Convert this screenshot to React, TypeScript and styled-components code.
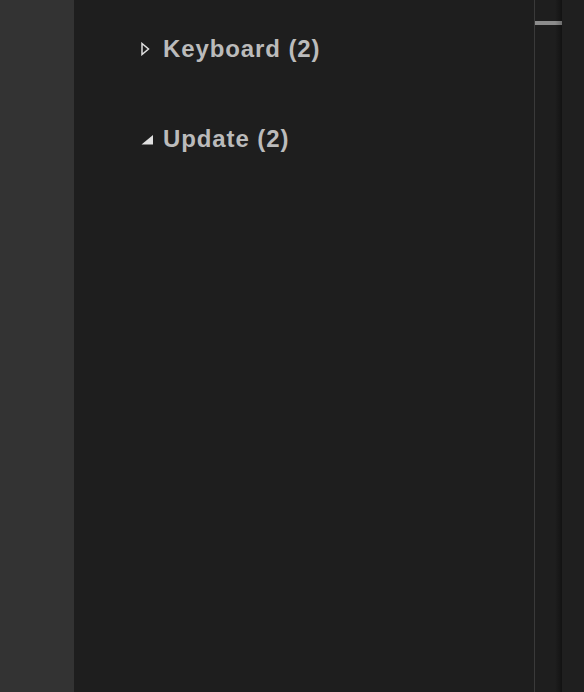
import React from 'react'
import styled, { createGlobalStyle } from 'styled-components'

const GlobalStyle = createGlobalStyle`
  html, body {
    margin: 0;
    padding: 0;
    background: #1e1e1e;
  }
  #root {
    height: 692px;
  }
`

const Layout = styled.div`
  display: flex;
  flex-direction: row;
  height: 692px;
  width: 584px;
  overflow: hidden;
`

const SideBar = styled.div`
  width: 74px;
  flex-shrink: 0;
  background: #333333;
`

const Content = styled.div`
  width: 460px;
  flex-shrink: 0;
  background: #1e1e1e;
  display: flex;
  flex-direction: column;
  padding: 35px 0 0 67px;
  gap: 62px;
  box-sizing: border-box;
`

const Gutter = styled.div`
  width: 27px;
  flex-shrink: 0;
  border-left: 1px solid #3a3a3a;
  background: linear-gradient(
    to right,
    #1e1e1e 0,
    #1e1e1e 20px,
    #161616 25px,
    #121212 27px
  );
  padding-top: 21px;
`

const Thumb = styled.div`
  height: 4px;
  background: linear-gradient(to right, #8c8c8c 0, #8c8c8c 20px, #6e6e6e 27px);
`

const Edge = styled.div`
  flex-grow: 1;
  background: #1f1f1f;
`

const Section = styled.div`
  display: flex;
  flex-direction: row;
  align-items: center;
  height: 28px;
`

const Twistie = styled.span`
  width: 22px;
  height: 28px;
  display: flex;
  align-items: center;
  flex-shrink: 0;
`

const Label = styled.h2`
  margin: 0;
  font-family: 'Liberation Sans', Arial, sans-serif;
  font-weight: bold;
  font-size: 24px;
  letter-spacing: 0.9px;
  color: #bbbbbb;
  line-height: 28px;
`

type SectionProps = {
  title: string
  count: number
  open?: boolean
}

const Collapsed = () => (
  <svg width="10" height="14" viewBox="0 0 10 14">
    <path d="M1 1.5 L7.5 7 L1 12.5 Z" fill="none" stroke="#e0e0e0" strokeWidth="1.5" />
  </svg>
)

const Expanded = () => (
  <svg width="13" height="12" viewBox="0 0 13 12" style={{ marginTop: 2 }}>
    <path d="M12 1 L12 10.5 L0.5 10.5 Z" fill="#e0e0e0" />
  </svg>
)

const SettingsSection = ({ title, count, open }: SectionProps) => (
  <Section>
    <Twistie>{open ? <Expanded /> : <Collapsed />}</Twistie>
    <Label>{`${title} (${count})`}</Label>
  </Section>
)

export default function App() {
  return (
    <>
      <GlobalStyle />
      <Layout>
        <SideBar />
        <Content>
          <SettingsSection title="Keyboard" count={2} />
          <SettingsSection title="Update" count={2} open />
        </Content>
        <Gutter>
          <Thumb />
        </Gutter>
        <Edge />
      </Layout>
    </>
  )
}
